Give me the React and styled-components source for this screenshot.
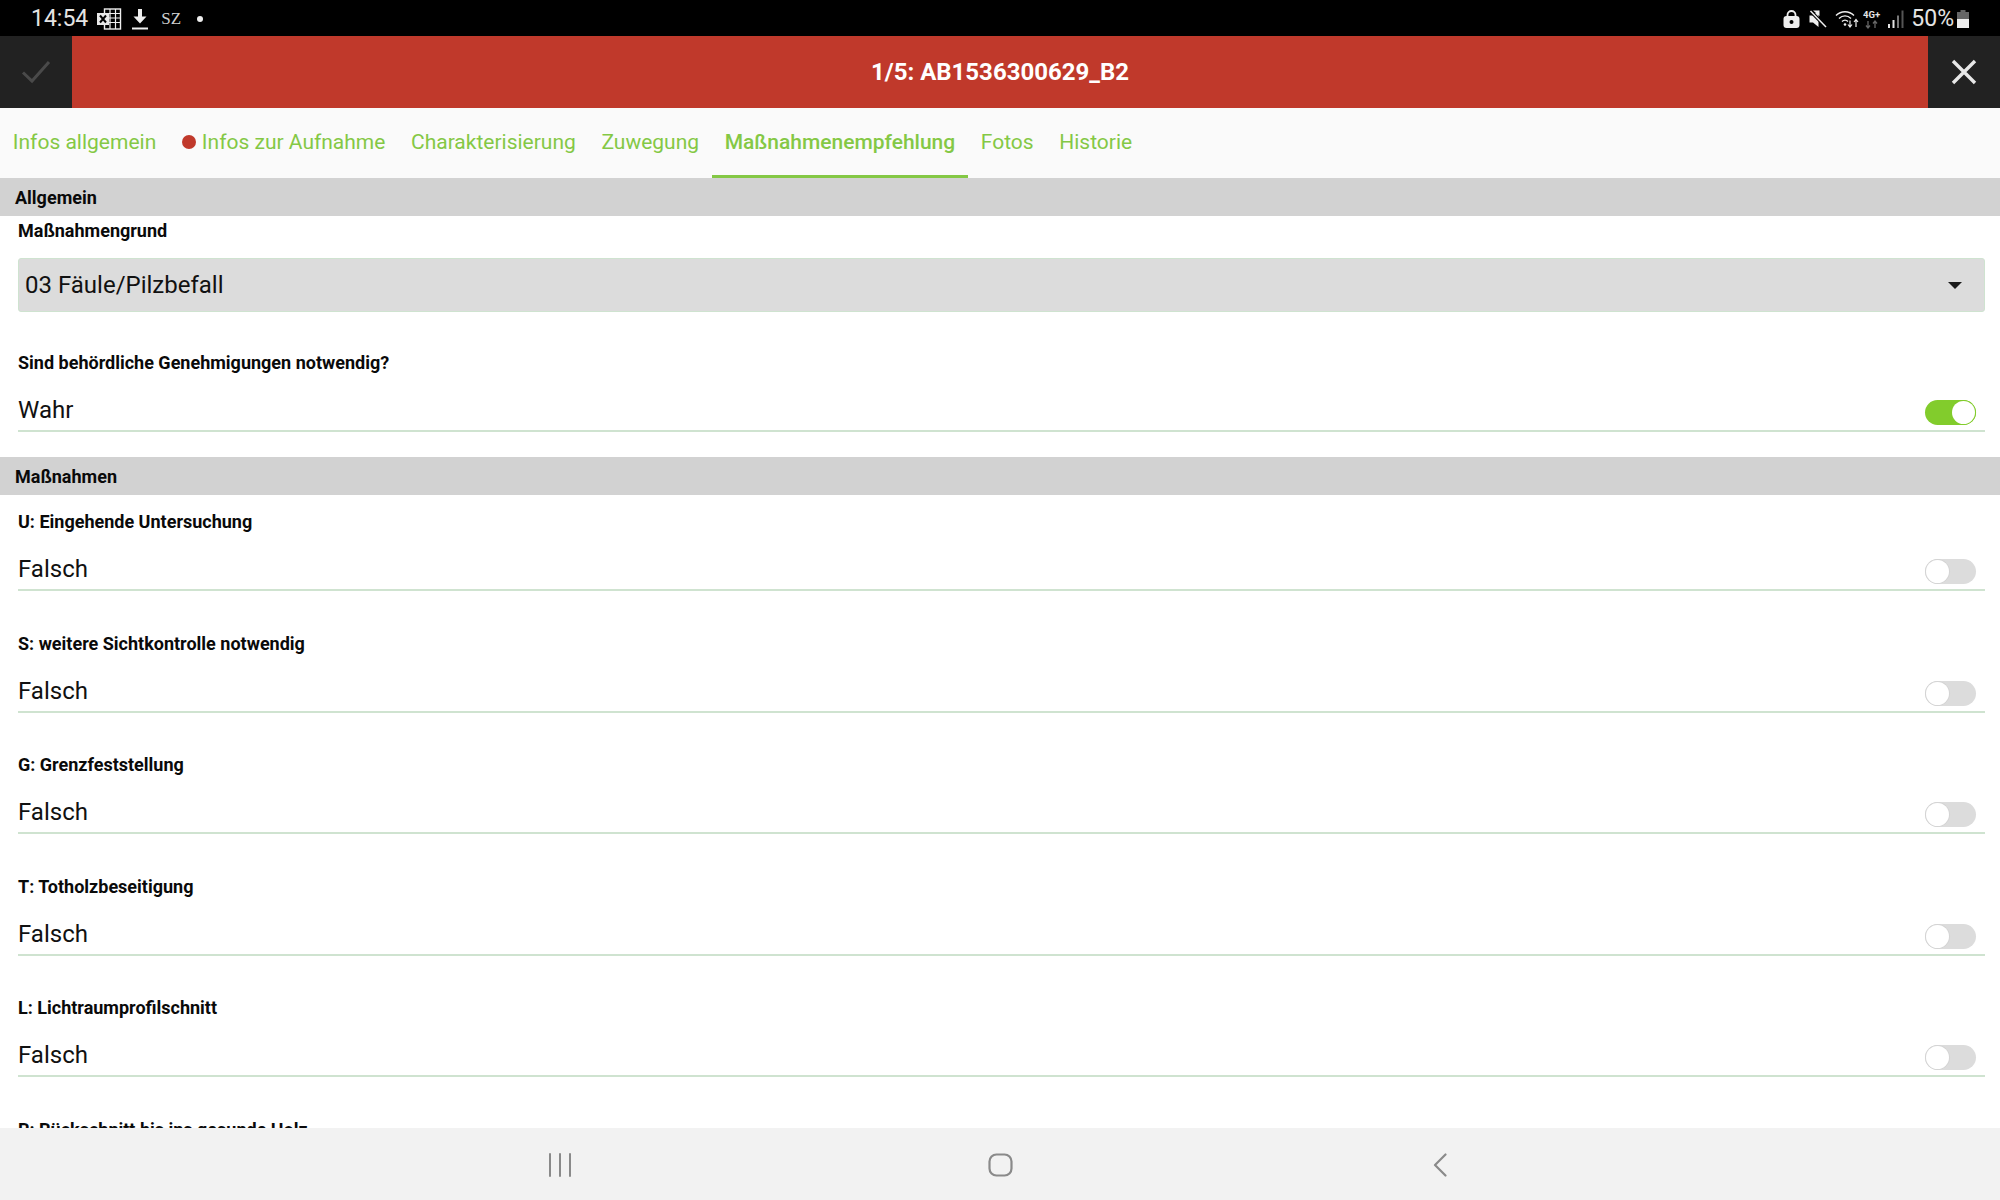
import React from "react";
import styled, { createGlobalStyle } from "styled-components";

const Global = createGlobalStyle`
  html, body { margin: 0; padding: 0; background: #fff; }
  * { box-sizing: border-box; }
  body { font-family: Roboto, "Liberation Sans", sans-serif; }
`;

const Page = styled.div`
  width: 2000px;
  height: 1200px;
  display: flex;
  flex-direction: column;
  overflow: hidden;
  background: #fff;
`;

const StatusBar = styled.div`
  height: 36px;
  flex: none;
  background: #000;
  color: #e4e4e4;
  display: flex;
  align-items: center;
  justify-content: space-between;
  padding: 2px 31px 0 31px;
`;
const StatusGroup = styled.div`
  display: flex;
  align-items: center;
`;
const Clock = styled.span`
  font-size: 23px;
  line-height: 34px;
  margin-right: 9px;
`;
const Carrier = styled.span`
  font-family: "Liberation Serif", serif;
  font-size: 17px;
  margin: 0 16px 0 13px;
  color: #cfcfcf;
`;
const Dot = styled.span`
  width: 6px;
  height: 6px;
  border-radius: 50%;
  background: #eee;
`;
const Battery = styled.span`
  font-size: 23px;
  line-height: 34px;
  margin: 0 3px 0 7px;
`;

const Header = styled.div`
  height: 72px;
  flex: none;
  display: flex;
  background: #c0392b;
`;
const HeaderButton = styled.div`
  width: 72px;
  flex: none;
  background: #222;
  display: flex;
  align-items: center;
  justify-content: center;
`;
const Title = styled.div`
  flex: 1;
  text-align: center;
  color: #fff;
  font-size: 24px;
  font-weight: 700;
  line-height: 72px;
`;

const Tabs = styled.div`
  height: 70px;
  flex: none;
  background: #fafafa;
  display: flex;
`;
const Tab = styled.div`
  height: 70px;
  padding: 1px 12.8px 0;
  display: flex;
  align-items: center;
  gap: 6px;
  font-size: 21px;
  font-weight: ${p => (p.$active ? 500 : 400)};
  color: #84c845;
  border-bottom: 3px solid ${p => (p.$active ? "#84c845" : "transparent")};
`;
const ErrorDot = styled.span`
  width: 14px;
  height: 14px;
  border-radius: 50%;
  background: #c0392b;
`;

const Content = styled.div`
  flex: 1;
  min-height: 0;
  overflow: hidden;
  background: #fff;
`;
const SectionBar = styled.div`
  height: 38px;
  background: #d2d2d2;
  padding-left: 15px;
  font-size: 18px;
  font-weight: 700;
  line-height: 39px;
  color: #0a0a0a;
`;
const SelectLabel = styled.div`
  padding: 4px 0 0 18px;
  height: 42px;
  font-size: 18px;
  font-weight: 700;
  line-height: 22px;
  color: #0a0a0a;
`;
const Select = styled.div`
  margin: 0 15px 24px 18px;
  height: 54px;
  background: #dcdcdc;
  border: 1px solid #cfe3d0;
  border-radius: 3px;
  display: flex;
  align-items: center;
  justify-content: space-between;
  padding: 0 22px 0 6px;
  font-size: 24px;
  color: #111;
`;
const Caret = styled.span`
  width: 0;
  height: 0;
  border-left: 7.5px solid transparent;
  border-right: 7.5px solid transparent;
  border-top: 7.5px solid #1a1a1a;
`;
const Field = styled.div`
  height: 96px;
  margin: 0 15px ${p => (p.$lastInSection ? "25px" : "25.5px")} 18px;
`;
const FieldLabel = styled.div`
  padding-top: 16px;
  height: 54px;
  font-size: 18px;
  font-weight: 700;
  line-height: 22px;
  color: #0a0a0a;
`;
const ValueRow = styled.div`
  height: 42px;
  border-bottom: 2px solid #cfe3d0;
  display: flex;
  align-items: center;
  justify-content: space-between;
  padding: 0 9px 0 0;
  font-size: 24px;
  color: #111;
`;
const Toggle = styled.span`
  position: relative;
  width: 51px;
  height: 25px;
  margin-top: 5px;
  border-radius: 13px;
  background: ${p => (p.$on ? "#82cc2c" : "#dcdcdc")};
  &::after {
    content: "";
    position: absolute;
    top: 1px;
    ${p => (p.$on ? "right: 1px;" : "left: 1px;")}
    width: 23px;
    height: 23px;
    border-radius: 50%;
    background: #fff;
    box-shadow: 0 0 0 1px ${p => (p.$on ? "#82cc2c" : "#d4d4d4")};
  }
`;

const NavBar = styled.div`
  height: 72px;
  flex: none;
  background: #f2f2f2;
  display: grid;
  grid-template-columns: repeat(3, 440px);
  justify-content: center;
  justify-items: center;
  align-items: center;
  padding-top: 2px;
`;

const ExcelIcon = () => (
  <svg width="25" height="22" viewBox="0 0 25 22" fill="none">
    <rect x="7.5" y="1" width="16" height="20" fill="#000" stroke="#eee" strokeWidth="1.4" />
    <path d="M7 5.5H24M7 10H24M7 14.5H24M13 1V21M18.500 1V21" stroke="#eee" strokeWidth="1.2" />
    <rect x="0" y="5" width="12" height="12" fill="#e8e8e8" />
    <path d="M3 7.500L9 14.500M9 7.500L3 14.500" stroke="#000" strokeWidth="2" />
  </svg>
);
const DownloadIcon = () => (
  <svg width="16" height="23" viewBox="0 0 16 23" style={{ marginLeft: 10 }}>
    <path d="M6 1H10V8.500H14.500L8 15.500L1.500 8.500H6Z" fill="#eee" />
    <rect x="0" y="19.500" width="16" height="2" fill="#eee" />
  </svg>
);
const LockIcon = () => (
  <svg width="17" height="18" viewBox="0 0 17 18" style={{ marginRight: 9 }}>
    <path d="M4.500 7V5a4 4 0 0 1 8 0v2" fill="none" stroke="#eee" strokeWidth="1.800" />
    <rect x="0.500" y="6" width="16" height="12" rx="3" fill="#eee" />
    <circle cx="8.500" cy="12" r="2" fill="#000" />
  </svg>
);
const MuteIcon = () => (
  <svg width="18" height="18" viewBox="0 0 18 18" style={{ marginRight: 8 }}>
    <path d="M0.500 5.500H4L9.500 0.500V17L4 12.500H0.500Z" fill="#eee" />
    <path d="M10.500 0.500V6L4 0.500Z" fill="#eee" />
    <path d="M1.500 1L17 17" stroke="#000" strokeWidth="3.500" />
    <path d="M1.500 1L17 17" stroke="#eee" strokeWidth="1.500" />
  </svg>
);
const WifiIcon = () => (
  <svg width="24" height="20" viewBox="0 0 24 20" fill="none" style={{ marginRight: 4 }}>
    <path d="M1 6.500C6 1.500 14 1.500 19 6.500" stroke="#eee" strokeWidth="1.400" />
    <path d="M4 9.500C7.500 6 12.500 6 16 9.500" stroke="#eee" strokeWidth="1.400" />
    <path d="M7 12.500C8.800 10.700 11.200 10.700 13 12.500" stroke="#eee" strokeWidth="1.400" />
    <circle cx="10" cy="15.500" r="1.300" fill="#eee" />
    <path d="M15 11.500V18M13 15.500L15 18L17 15.500" stroke="#eee" strokeWidth="1.200" />
    <path d="M21 18V11M19 13L21 10.500L23 13" stroke="#eee" strokeWidth="1.200" />
  </svg>
);
const NetworkIcon = () => (
  <svg width="19" height="22" viewBox="0 0 19 22" fill="none" style={{ marginRight: 6 }}>
    <text x="0" y="10" fontSize="9.500" fontWeight="700" fontFamily="Roboto, sans-serif" fill="#e4e4e4">4G+</text>
    <path d="M5 13V20M3 17.500L5 20L7 17.500" stroke="#666" strokeWidth="1.300" />
    <path d="M12 20V13M10 15.500L12 13L14 15.500" stroke="#666" strokeWidth="1.300" />
  </svg>
);
const SignalIcon = () => (
  <svg width="16" height="18" viewBox="0 0 16 18">
    <rect x="0" y="14" width="2" height="4" fill="#e4e4e4" />
    <rect x="4.500" y="10" width="2" height="8" fill="#e4e4e4" />
    <rect x="9" y="5.500" width="2" height="12.500" fill="#777" />
    <rect x="13.500" y="0.500" width="2" height="17.500" fill="#555" />
  </svg>
);
const BatteryIcon = () => (
  <svg width="12" height="18" viewBox="0 0 12 18">
    <rect x="3.500" y="0" width="5" height="2" fill="#666" />
    <rect x="0" y="2" width="12" height="7" fill="#666" />
    <rect x="0" y="9" width="12" height="9" fill="#eee" />
  </svg>
);
const CheckIcon = () => (
  <svg width="30" height="24" viewBox="0 0 30 24" fill="none">
    <path d="M2 12.500L11 21L28 2" stroke="#4a4a4a" strokeWidth="3" />
  </svg>
);
const CloseIcon = () => (
  <svg width="26" height="26" viewBox="0 0 26 26" fill="none">
    <path d="M2 2L24 24M24 2L2 24" stroke="#e8e8e8" strokeWidth="3.400" />
  </svg>
);
const RecentsIcon = () => (
  <svg width="24" height="24" viewBox="0 0 24 24" fill="none">
    <path d="M2 1V23M12 1V23M22 1V23" stroke="#8a8a8a" strokeWidth="2" strokeLinecap="round" />
  </svg>
);
const HomeIcon = () => (
  <svg width="25" height="24" viewBox="0 0 25 24" fill="none">
    <rect x="1.500" y="1.500" width="22" height="21" rx="7" stroke="#8a8a8a" strokeWidth="2.200" />
  </svg>
);
const BackIcon = () => (
  <svg width="14" height="24" viewBox="0 0 14 24" fill="none">
    <path d="M12.500 1.500L2 12L12.500 22.500" stroke="#8a8a8a" strokeWidth="2.200" strokeLinecap="round" strokeLinejoin="round" />
  </svg>
);

const tabs = [
  { name: "Infos allgemein" },
  { name: "Infos zur Aufnahme", error: true },
  { name: "Charakterisierung" },
  { name: "Zuwegung" },
  { name: "Maßnahmenempfehlung", active: true },
  { name: "Fotos" },
  { name: "Historie" },
];
const measures = [
  { label: "U: Eingehende Untersuchung", value: "Falsch" },
  { label: "S: weitere Sichtkontrolle notwendig", value: "Falsch" },
  { label: "G: Grenzfeststellung", value: "Falsch" },
  { label: "T: Totholzbeseitigung", value: "Falsch" },
  { label: "L: Lichtraumprofilschnitt", value: "Falsch" },
  { label: "R: Rückschnitt bis ins gesunde Holz" },
];

export default function App() {
  return (
    <Page>
      <Global />
      <StatusBar>
        <StatusGroup>
          <Clock>14:54</Clock>
          <ExcelIcon />
          <DownloadIcon />
          <Carrier>SZ</Carrier>
          <Dot />
        </StatusGroup>
        <StatusGroup>
          <LockIcon />
          <MuteIcon />
          <WifiIcon />
          <NetworkIcon />
          <SignalIcon />
          <Battery>50%</Battery>
          <BatteryIcon />
        </StatusGroup>
      </StatusBar>
      <Header>
        <HeaderButton><CheckIcon /></HeaderButton>
        <Title>1/5: AB1536300629_B2</Title>
        <HeaderButton><CloseIcon /></HeaderButton>
      </Header>
      <Tabs>
        {tabs.map(t => (
          <Tab key={t.name} $active={t.active}>
            {t.error && <ErrorDot />}
            {t.name}
          </Tab>
        ))}
      </Tabs>
      <Content>
        <SectionBar>Allgemein</SectionBar>
        <SelectLabel>Maßnahmengrund</SelectLabel>
        <Select>
          03 Fäule/Pilzbefall
          <Caret />
        </Select>
        <Field $lastInSection>
          <FieldLabel>Sind behördliche Genehmigungen notwendig?</FieldLabel>
          <ValueRow>Wahr<Toggle $on /></ValueRow>
        </Field>
        <SectionBar>Maßnahmen</SectionBar>
        {measures.map(m => (
          <Field key={m.label}>
            <FieldLabel>{m.label}</FieldLabel>
            {m.value && <ValueRow>{m.value}<Toggle /></ValueRow>}
          </Field>
        ))}
      </Content>
      <NavBar>
        <RecentsIcon />
        <HomeIcon />
        <BackIcon />
      </NavBar>
    </Page>
  );
}
